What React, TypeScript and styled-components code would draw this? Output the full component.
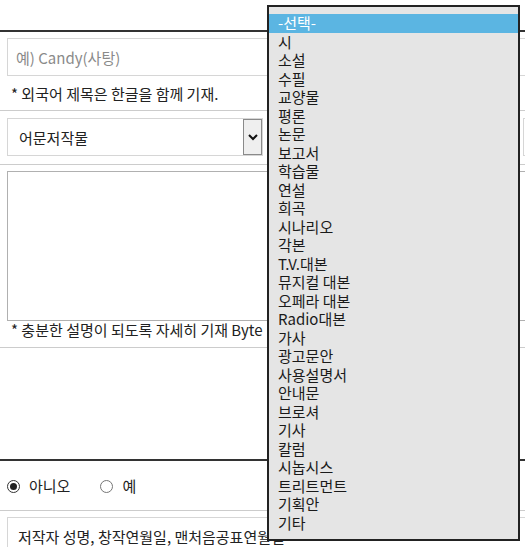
import React from 'react'
import styled, { createGlobalStyle } from 'styled-components'

const GlobalStyle = createGlobalStyle`
  html, body {
    margin: 0;
    padding: 0;
    overflow: hidden;
    background: #fff;
  }
  body {
    font-family: "Noto Sans CJK KR", "Noto Sans", sans-serif;
    font-size: 15px;
    color: #222;
  }
`

const Page = styled.div`
  position: relative;
  width: 640px;
  height: 547px;
  padding-top: 30px;
  box-sizing: border-box;
`

const Table = styled.div`
  border-top: 2px solid #333;
`

const Row = styled.div<{ pad?: string; minH?: number; thick?: boolean; noLine?: boolean }>`
  padding: ${p => p.pad ?? '6px 7px 7px'};
  min-height: ${p => (p.minH ? `${p.minH}px` : 'auto')};
  border-bottom: ${p => (p.noLine ? 'none' : '1px solid #ccc')};
  border-top: ${p => (p.thick ? '2px solid #333' : 'none')};
  box-sizing: border-box;
`

const TextInput = styled.div<{ placeholder?: boolean }>`
  height: 38px;
  box-sizing: border-box;
  border: 1px solid #d6d6d6;
  background: #fff;
  display: flex;
  align-items: center;
  padding: 0 8px 0 ${p => (p.placeholder ? 8 : 10)}px;
  white-space: nowrap;
  overflow: hidden;
  color: ${p => (p.placeholder ? '#8a8a8a' : '#222')};
`

const Note = styled.p<{ gap: number }>`
  margin: ${p => p.gap}px 0 0 4px;
  line-height: 18px;
  white-space: nowrap;
  color: #222;
`

const SelectLine = styled.div`
  display: flex;
  align-items: center;
  gap: 260px;
`

const SelectBox = styled.div`
  width: 256px;
  height: 38px;
  box-sizing: border-box;
  border: 1px solid #d6d6d6;
  display: flex;
  align-items: center;
  justify-content: space-between;
  padding: 0 0 0 11px;
`

const SelectButton = styled.div`
  width: 19px;
  height: 36px;
  box-sizing: border-box;
  border: 1px solid #8a8a8a;
  background: #efefef;
  display: flex;
  align-items: center;
  justify-content: center;
`

const GhostBox = styled.div`
  width: 60px;
  height: 38px;
  box-sizing: border-box;
  border: 1px solid #d6d6d6;
`

const TextArea = styled.div`
  height: 150px;
  box-sizing: border-box;
  border: 1px solid #b0b0b0;
  background: #fff;
`

const RadioGroup = styled.div`
  display: flex;
  align-items: center;
  height: 36px;
`

const RadioLabel = styled.label`
  display: flex;
  align-items: center;
  gap: 9px;
  margin-right: 30px;
  line-height: 18px;
`

const RadioCircle = styled.span<{ checked?: boolean }>`
  width: 13px;
  height: 13px;
  box-sizing: border-box;
  border-radius: 50%;
  border: 1px solid ${p => (p.checked ? '#333' : '#767676')};
  background: #fff;
  display: flex;
  align-items: center;
  justify-content: center;

  &::after {
    content: '';
    display: ${p => (p.checked ? 'block' : 'none')};
    width: 7px;
    height: 7px;
    border-radius: 50%;
    background: #222;
  }
`

const Dropdown = styled.ul`
  position: absolute;
  left: 267px;
  top: 5px;
  width: 253px;
  height: 536px;
  box-sizing: border-box;
  margin: 0;
  padding: 7px 0;
  list-style: none;
  border: 2px solid #222;
  background: #e5e5e5;
`

const Option = styled.li<{ active?: boolean }>`
  height: 18.5px;
  line-height: 18.5px;
  padding-left: 9px;
  font-size: 15px;
  white-space: nowrap;
  color: ${p => (p.active ? '#fff' : '#1a1a1a')};
  background: ${p => (p.active ? '#5bb5e2' : 'transparent')};
`

const options = [
  '-선택-', '시', '소설', '수필', '교양물', '평론', '논문', '보고서', '학습물', '연설',
  '희곡', '시나리오', '각본', 'T.V.대본', '뮤지컬 대본', '오페라 대본', 'Radio대본', '가사',
  '광고문안', '사용설명서', '안내문', '브로셔', '기사', '칼럼', '시놉시스', '트리트먼트',
  '기획안', '기타',
]

const Chevron = () => (
  <svg width="10" height="7" viewBox="0 0 10 7">
    <polyline points="1,1 5,5 9,1" fill="none" stroke="#111" strokeWidth="2" />
  </svg>
)

export default function App() {
  return (
    <>
      <GlobalStyle />
      <Page>
        <Table>
          <Row>
            <TextInput placeholder>예) Candy(사탕)</TextInput>
            <Note gap={9}>* 외국어 제목은 한글을 함께 기재.</Note>
          </Row>
          <Row pad="7px 7px 8px">
            <SelectLine>
              <SelectBox>
                <span>어문저작물</span>
                <SelectButton>
                  <Chevron />
                </SelectButton>
              </SelectBox>
              <GhostBox />
            </SelectLine>
          </Row>
          <Row pad="6px 7px 8px">
            <TextArea />
            <Note gap={0}>* 충분한 설명이 되도록 자세히 기재 Byte</Note>
          </Row>
          <Row pad="0" minH={111} noLine />
          <Row pad="7px 7px 6px" thick>
            <RadioGroup>
              <RadioLabel>
                <RadioCircle checked />
                아니오
              </RadioLabel>
              <RadioLabel>
                <RadioCircle />
                예
              </RadioLabel>
            </RadioGroup>
          </Row>
          <Row pad="6px 7px" noLine>
            <TextInput>저작자 성명, 창작연월일, 맨처음공표연월일</TextInput>
          </Row>
        </Table>
        <Dropdown>
          {options.map((o, i) => (
            <Option key={o} active={i === 0}>
              {o}
            </Option>
          ))}
        </Dropdown>
      </Page>
    </>
  )
}
